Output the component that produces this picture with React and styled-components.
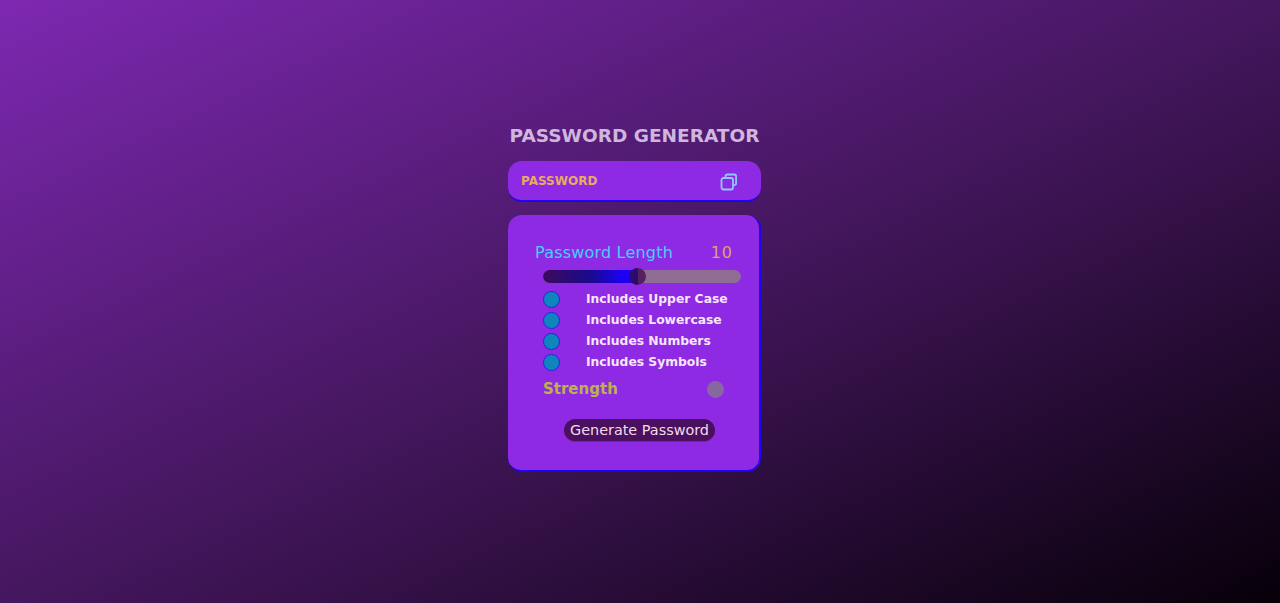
import React from 'react';
import styled, { createGlobalStyle } from 'styled-components';

const options = ['Includes Upper Case', 'Includes Lowercase', 'Includes Numbers', 'Includes Symbols'];

const GlobalStyle = createGlobalStyle`
  html, body {
    margin: 0;
    height: 100%;
  }
  body {
    font-family: "DejaVu Sans", sans-serif;
  }
`;

const Page = styled.div`
  height: 603px;
  overflow: hidden;
  display: flex;
  flex-direction: column;
  align-items: center;
  padding-top: 123px;
  box-sizing: border-box;
  background: linear-gradient(to bottom right, #7d28b1, #45175f 50%, #070009);
`;

const Column = styled.div`
  width: 253px;
  margin-left: -11px;
  display: flex;
  flex-direction: column;
`;

const Title = styled.h1`
  margin: 0 0 13px;
  height: 25px;
  line-height: 25px;
  font-size: 18.5px;
  font-weight: 700;
  text-align: center;
  white-space: nowrap;
  color: #cfb6dd;
`;

const Display = styled.div`
  height: 41px;
  display: flex;
  align-items: center;
  justify-content: space-between;
  padding: 0 23px 0 13px;
  box-sizing: border-box;
  border-radius: 14px;
  background: #8e2ae3;
  border-bottom: 2px solid #2000f0;
  margin-bottom: 13px;
`;

const Placeholder = styled.span`
  font-size: 12px;
  font-weight: 700;
  color: #e8ac60;
`;

const CopyIcon = styled.svg`
  width: 18px;
  height: 18px;
  margin-top: 3px;
  color: #8ec8ff;
`;

const Card = styled.div`
  height: 257px;
  padding: 26px 19px 0 27px;
  box-sizing: border-box;
  border-radius: 14px;
  background: #8e2ae3;
  border-bottom: 2px solid #2000f0;
  border-right: 2px solid #2000f0;
  display: flex;
  flex-direction: column;
`;

const LengthRow = styled.div`
  display: flex;
  justify-content: space-between;
  align-items: center;
  height: 22px;
  padding-right: 7px;
  font-size: 16px;
  letter-spacing: 0.2px;
`;

const LengthLabel = styled.span`
  color: #44d0ff;
`;

const LengthValue = styled.span`
  letter-spacing: 1px;
  color: #e29f66;
`;

const Track = styled.div`
  position: relative;
  width: 198px;
  height: 13px;
  margin: 7px 0 6px 8px;
  flex: none;
  border-radius: 7px;
  background: #8f6c94;
`;

const Fill = styled.div`
  height: 100%;
  border-radius: 7px 0 0 7px;
  background: linear-gradient(to right, #3d0a5c, #1a0a8c 50%, #1c00f5 85%);
`;

const Thumb = styled.div`
  position: absolute;
  top: -2px;
  width: 17px;
  height: 17px;
  margin-left: -8px;
  border-radius: 50%;
  background: linear-gradient(to right, #2b0c6e 50%, #55205f 50%);
`;

const Option = styled.label`
  display: flex;
  align-items: center;
  height: 21px;
  margin-left: 8px;
  font-size: 12.3px;
  font-weight: 700;
  white-space: nowrap;
  color: #f6e6fa;
`;

const OptionText = styled.span`
  margin-bottom: 2px;
`;

const Check = styled.span`
  width: 15px;
  height: 15px;
  margin-right: 26px;
  flex: none;
  border-radius: 50%;
  background: #0f85be;
  border: 1px solid #2a22dc;
`;

const StrengthRow = styled.div`
  display: flex;
  justify-content: space-between;
  align-items: center;
  height: 22px;
  margin: 5px 8px 0 8px;
  padding-right: 8px;
  font-size: 15px;
  font-weight: 700;
  color: #bdb24a;
`;

const StrengthDot = styled.span`
  width: 17px;
  height: 17px;
  border-radius: 50%;
  background: #86689f;
`;

const Generate = styled.button`
  align-self: flex-start;
  margin: 19px 0 0 29px;
  height: 23px;
  padding: 0 6px;
  border: 0;
  border-bottom: 1px solid #a0158a;
  border-radius: 12px;
  background: #48105f;
  color: #f8d9e8;
  font-family: inherit;
  font-size: 14.4px;
  white-space: nowrap;
`;

export default function App() {
  return (
    <Page>
      <GlobalStyle />
      <Column>
        <Title>PASSWORD GENERATOR</Title>
        <Display>
          <Placeholder>PASSWORD</Placeholder>
          <CopyIcon viewBox="0 0 18 18" fill="none" stroke="currentColor" strokeWidth="1.8">
            <rect x="1.5" y="5" width="11.5" height="11.5" rx="2" />
            <path d="M5.5 5V3.3A1.8 1.8 0 0 1 7.3 1.5h7A1.8 1.8 0 0 1 16.1 3.3v7a1.8 1.8 0 0 1-1.8 1.8H13" />
          </CopyIcon>
        </Display>
        <Card>
          <LengthRow>
            <LengthLabel>Password Length</LengthLabel>
            <LengthValue>10</LengthValue>
          </LengthRow>
          <Track>
            <Fill style={{ width: '47.5%' }} />
            <Thumb style={{ left: '47.5%' }} />
          </Track>
          {options.map((option) => (
            <Option key={option}>
              <Check />
              <OptionText>{option}</OptionText>
            </Option>
          ))}
          <StrengthRow>
            Strength
            <StrengthDot />
          </StrengthRow>
          <Generate>Generate Password</Generate>
        </Card>
      </Column>
    </Page>
  );
}
